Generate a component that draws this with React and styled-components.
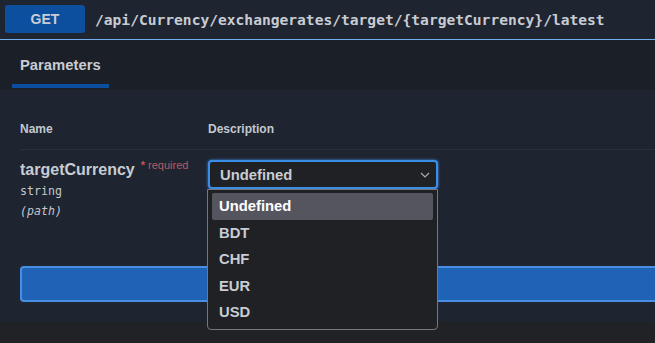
import React from 'react';
import styled, { createGlobalStyle } from 'styled-components';

const GlobalStyle = createGlobalStyle`
  html, body {
    margin: 0;
    padding: 0;
    background: #1e2430;
    overflow: hidden;
  }
  body {
    font-family: 'Liberation Sans', Arial, sans-serif;
    color: #c8ccd3;
  }
`;

const options = ['Undefined', 'BDT', 'CHF', 'EUR', 'USD'];

const App = () => (
  <>
    <GlobalStyle />
    <Page>
      <Summary>
        <Method>GET</Method>
        <Path>/api/Currency/exchangerates/target/{'{targetCurrency}'}/latest</Path>
      </Summary>

      <SectionHeader>
        <Tab>Parameters</Tab>
      </SectionHeader>

      <Body>
        <HeadRow>
          <HeadCell>Name</HeadCell>
          <HeadCell>Description</HeadCell>
        </HeadRow>

        <ParamRow>
          <NameCell>
            <ParamName>
              targetCurrency
              <Required>
                <Star>*</Star> required
              </Required>
            </ParamName>
            <ParamType>string</ParamType>
            <ParamIn>(path)</ParamIn>
          </NameCell>
          <DescCell>
            <SelectBox>
              <span>Undefined</span>
              <Chevron width="10" height="6" viewBox="0 0 10 6">
                <path d="M1 1l4 4 4-4" fill="none" stroke="#a9adb4" strokeWidth="1.2" />
              </Chevron>
            </SelectBox>
            <Options>
              {options.map((o, i) => (
                <Option key={o} active={i === 0}>
                  {o}
                </Option>
              ))}
            </Options>
          </DescCell>
        </ParamRow>

        <ExecuteButton />
      </Body>

      <Responses>
        <ResponsesTitle>Responses</ResponsesTitle>
      </Responses>
    </Page>
  </>
);

export default App;

// styles
const Page = styled.div`
  width: 700px;
`;

const Summary = styled.div`
  display: flex;
  align-items: center;
  padding: 5px 5px 6px;
  border-bottom: 1px solid #72adee;
`;

const Method = styled.div`
  width: 80px;
  height: 28px;
  display: flex;
  align-items: center;
  justify-content: center;
  background: #0c4f9e;
  border-radius: 3px;
  font-size: 14px;
  font-weight: 700;
  color: #c9cdd4;
`;

const Path = styled.div`
  margin-left: 10px;
  font-family: 'DejaVu Sans Mono', 'Liberation Mono', monospace;
  font-size: 14.6px;
  font-weight: 700;
  color: #c8ccd2;
`;

const SectionHeader = styled.div`
  height: 50px;
  box-sizing: border-box;
  padding: 0 12px;
  background: #1b1f27;
  display: flex;
  align-items: flex-start;
`;

const Tab = styled.div`
  padding: 15px 8px 9px;
  line-height: 20px;
  font-size: 14.8px;
  font-weight: 700;
  color: #c8ccd3;
  border-bottom: 4px solid #0c4f9e;
`;

const Body = styled.div`
  padding: 30px 0 20px 20px;
`;

const HeadRow = styled.div`
  display: grid;
  grid-template-columns: 188px 1fr;
  padding-bottom: 11px;
  border-bottom: 1px solid #2b313c;
`;

const HeadCell = styled.div`
  font-size: 12px;
  line-height: 18px;
  font-weight: 700;
  color: #c3c8cf;
`;

const ParamRow = styled.div`
  display: grid;
  grid-template-columns: 188px 1fr;
  box-sizing: border-box;
  padding-top: 10px;
  height: 116px;
`;

const NameCell = styled.div`
  display: flex;
  flex-direction: column;
`;

const ParamName = styled.div`
  font-size: 16px;
  line-height: 20px;
  font-weight: 700;
  color: #c8ccd3;
  white-space: nowrap;
`;

const Required = styled.span`
  position: relative;
  top: -6px;
  margin-left: 6px;
  font-size: 11px;
  font-weight: 400;
  color: #b85c60;
`;

const Star = styled.span`
  color: #c8555b;
  font-weight: 700;
`;

const ParamType = styled.div`
  font-family: 'DejaVu Sans Mono', 'Liberation Mono', monospace;
  font-size: 11.6px;
  line-height: 20px;
  color: #c3c8cf;
`;

const ParamIn = styled(ParamType)`
  font-style: italic;
`;

const DescCell = styled.div`
  position: relative;
`;

const SelectBox = styled.div`
  width: 230px;
  height: 29px;
  box-sizing: border-box;
  display: flex;
  align-items: center;
  justify-content: space-between;
  padding: 0 6px 0 10px;
  background: #1f2125;
  border: 2px solid #3a8ee8;
  border-radius: 4px;
  box-shadow: 0 0 3px #3a8ee8;
  font-size: 14.8px;
  font-weight: 700;
  color: #c8ccd3;
`;

const Chevron = styled.svg`
  display: block;
`;

const Options = styled.div`
  position: absolute;
  top: 29px;
  left: -1px;
  width: 231px;
  box-sizing: border-box;
  padding: 3px 4px;
  background: #202124;
  border: 1px solid #77787c;
  border-radius: 0 0 4px 4px;
  z-index: 2;
`;

const Option = styled.div`
  height: 26.5px;
  display: flex;
  align-items: center;
  padding-left: 7px;
  border-radius: 2px;
  font-size: 14.8px;
  font-weight: 700;
  color: ${({ active }) => (active ? '#ffffff' : '#c8ccd3')};
  background: ${({ active }) => (active ? '#55555f' : 'transparent')};
`;

const ExecuteButton = styled.div`
  height: 36px;
  box-sizing: border-box;
  background: #1f63b6;
  border: 2px solid #4a90e2;
  border-radius: 4px;
`;

const Responses = styled.div`
  background: #202226;
  padding: 19px 20px 20px;
`;

const ResponsesTitle = styled.h4`
  margin: 0;
  font-size: 16px;
  line-height: 20px;
  font-weight: 700;
  color: #c8ccd3;
`;
